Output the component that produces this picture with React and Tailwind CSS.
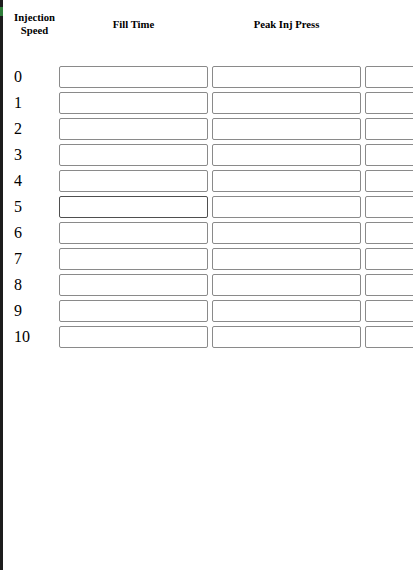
import { useState } from 'react';

const speeds = [0, 1, 2, 3, 4, 5, 6, 7, 8, 9, 10];

export default function App() {
  const [values, setValues] = useState({});

  function setValue(key, v) {
    setValues(prev => ({ ...prev, [key]: v }));
  }

  return (
    <div className="flex h-[570px] w-[413px] overflow-hidden bg-white font-['Liberation_Serif','Times_New_Roman',serif] text-black">
      {/* barra lateral */}
      <div className="flex w-[3px] shrink-0 flex-col bg-[#1d1d1d]">
        <div className="mt-[7px] h-[9px] w-full bg-[#2f7d3a]" />
      </div>

      <div className="flex flex-col pl-[7px]">
        <div className="flex h-[48px] items-center gap-[4px] text-[10.7px] font-bold leading-[13px]">
          <div className="w-[45px] shrink-0 pl-[4px] text-center">Injection<br />Speed</div>
          <div className="w-[149px] shrink-0 text-center">Fill Time</div>
          <div className="w-[149px] shrink-0 text-center">Peak Inj Press</div>
          <div className="w-[149px] shrink-0" />
        </div>

        <div className="mt-[18px] flex flex-col gap-[4px]">
          {speeds.map(s => (
            <div key={s} className="flex items-center gap-[4px]">
              <div className="w-[45px] shrink-0 pl-[4px] text-[16px] leading-[22px]">{s}</div>
              <input
                value={values[`fill-${s}`] || ''}
                onChange={e => setValue(`fill-${s}`, e.target.value)}
                className={`h-[22px] w-[149px] shrink-0 rounded-[2px] border px-1 text-[13px] outline-none ${s === 5 ? 'border-[#4f4f4f]' : 'border-[#8a8a8a]'}`}
              />
              <input
                value={values[`press-${s}`] || ''}
                onChange={e => setValue(`press-${s}`, e.target.value)}
                className="h-[22px] w-[149px] shrink-0 rounded-[2px] border border-[#8a8a8a] px-1 text-[13px] outline-none"
              />
              <input
                value={values[`extra-${s}`] || ''}
                onChange={e => setValue(`extra-${s}`, e.target.value)}
                className="h-[22px] w-[149px] shrink-0 rounded-[2px] border border-[#8a8a8a] px-1 text-[13px] outline-none"
              />
            </div>
          ))}
        </div>
      </div>
    </div>
  );
}
